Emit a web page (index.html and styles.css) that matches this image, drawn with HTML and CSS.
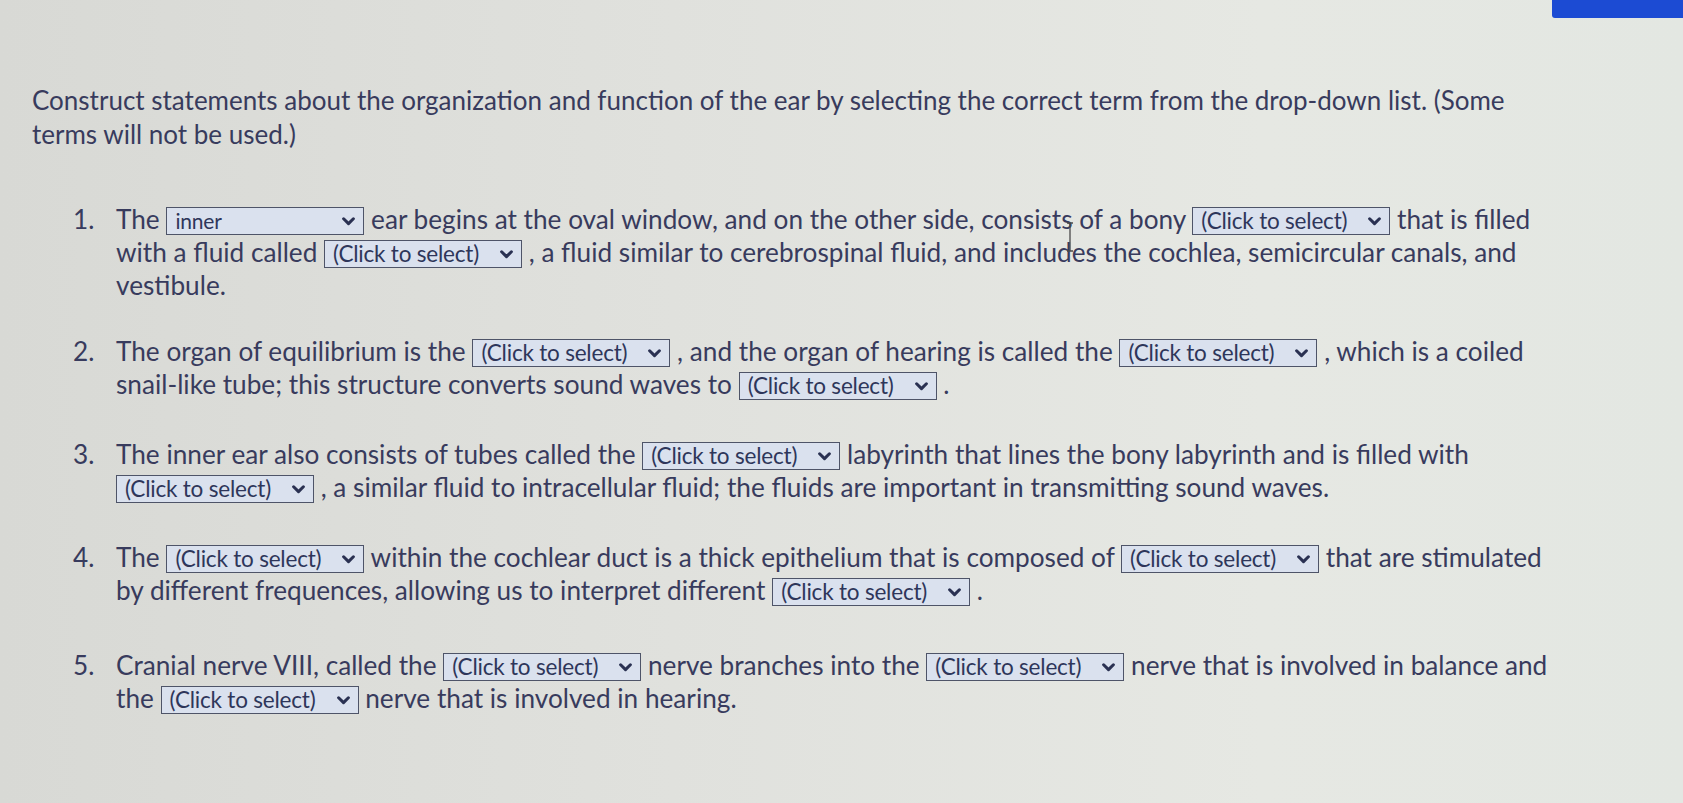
FILE: index.html
```html
<!DOCTYPE html>
<html lang="en">
<head>
<meta charset="utf-8">
<title>Ear organization</title>
<link rel="stylesheet" href="styles.css">
</head>
<body>
<div class="topbar"><div class="topbtn"></div></div>
<main class="content">
  <p class="intro">Construct statements about the organization and function of the ear by selecting the correct term from the drop-down list. (Some terms will not be used.)</p>
  <ol class="items">
    <li class="item"><span class="num">1.</span><div class="txt">The <span class="dd dd-inner"><span class="dd-label">inner</span><svg class="chev" viewBox="0 0 12 8"><path d="M1.5 1.5 L6 6 L10.5 1.5"/></svg></span> ear begins at the oval window, and on the other side, consists of a bony <span class="dd"><span class="dd-label">(Click to select)</span><svg class="chev" viewBox="0 0 12 8"><path d="M1.5 1.5 L6 6 L10.5 1.5"/></svg></span> that is filled with a fluid called <span class="dd"><span class="dd-label">(Click to select)</span><svg class="chev" viewBox="0 0 12 8"><path d="M1.5 1.5 L6 6 L10.5 1.5"/></svg></span> , a fluid similar to cerebrospinal fluid, and inclu<span class="cursor-wrap">d<svg class="ibeam" viewBox="0 0 8 30"><path d="M1 1 H7 M4 1 V29 M1 29 H7"/></svg></span>es the cochlea, semicircular canals, and vestibule.</div></li>
    <li class="item"><span class="num">2.</span><div class="txt">The organ of equilibrium is the <span class="dd"><span class="dd-label">(Click to select)</span><svg class="chev" viewBox="0 0 12 8"><path d="M1.5 1.5 L6 6 L10.5 1.5"/></svg></span> , and the organ of hearing is called the <span class="dd"><span class="dd-label">(Click to select)</span><svg class="chev" viewBox="0 0 12 8"><path d="M1.5 1.5 L6 6 L10.5 1.5"/></svg></span> , which is a coiled snail-like tube; this structure converts sound waves to <span class="dd"><span class="dd-label">(Click to select)</span><svg class="chev" viewBox="0 0 12 8"><path d="M1.5 1.5 L6 6 L10.5 1.5"/></svg></span> .</div></li>
    <li class="item"><span class="num">3.</span><div class="txt">The inner ear also consists of tubes called the <span class="dd"><span class="dd-label">(Click to select)</span><svg class="chev" viewBox="0 0 12 8"><path d="M1.5 1.5 L6 6 L10.5 1.5"/></svg></span> labyrinth that lines the bony labyrinth and is filled with <span class="dd"><span class="dd-label">(Click to select)</span><svg class="chev" viewBox="0 0 12 8"><path d="M1.5 1.5 L6 6 L10.5 1.5"/></svg></span> , a similar fluid to intracellular fluid; the fluids are important in transmitting sound waves.</div></li>
    <li class="item"><span class="num">4.</span><div class="txt">The <span class="dd"><span class="dd-label">(Click to select)</span><svg class="chev" viewBox="0 0 12 8"><path d="M1.5 1.5 L6 6 L10.5 1.5"/></svg></span> within the cochlear duct is a thick epithelium that is composed of <span class="dd"><span class="dd-label">(Click to select)</span><svg class="chev" viewBox="0 0 12 8"><path d="M1.5 1.5 L6 6 L10.5 1.5"/></svg></span> that are stimulated by different frequences, allowing us to interpret different <span class="dd"><span class="dd-label">(Click to select)</span><svg class="chev" viewBox="0 0 12 8"><path d="M1.5 1.5 L6 6 L10.5 1.5"/></svg></span> .</div></li>
    <li class="item item-last"><span class="num">5.</span><div class="txt">Cranial nerve VIII, called the <span class="dd"><span class="dd-label">(Click to select)</span><svg class="chev" viewBox="0 0 12 8"><path d="M1.5 1.5 L6 6 L10.5 1.5"/></svg></span> nerve branches into the <span class="dd"><span class="dd-label">(Click to select)</span><svg class="chev" viewBox="0 0 12 8"><path d="M1.5 1.5 L6 6 L10.5 1.5"/></svg></span> nerve that is involved in balance and the <span class="dd"><span class="dd-label">(Click to select)</span><svg class="chev" viewBox="0 0 12 8"><path d="M1.5 1.5 L6 6 L10.5 1.5"/></svg></span> nerve that is involved in hearing.</div></li>
  </ol>
</main>
</body>
</html>
```

FILE: styles.css
```css
html, body {
  margin: 0;
  padding: 0;
}
body {
  width: 1683px;
  height: 803px;
  overflow: hidden;
  background: linear-gradient(90deg, #d8d9d5 0%, #e0e1dd 40%, #e6e8e3 75%, #e3e7e2 100%);
  font-family: Lato, "Open Sans", "Liberation Sans", sans-serif;
  color: #383b5d;
}
.topbar {
  display: flex;
  justify-content: flex-end;
  height: 18px;
}
.topbtn {
  width: 131px;
  height: 18px;
  background: #1c4bd3;
  border-bottom-left-radius: 3px;
}
.content {
  width: 1526px;
  padding: 65px 0 0 32px;
}
.intro {
  margin: 0;
  font-size: 26px;
  line-height: 34px;
}
.items {
  list-style: none;
  margin: 52px 0 0 0;
  padding: 0;
}
.item {
  display: flex;
  font-size: 26.2px;
  line-height: 33px;
  margin-bottom: 37px;
}
.item:first-child {
  margin-bottom: 33px;
}
.item:nth-child(4) {
  margin-bottom: 42px;
}
.num {
  flex: 0 0 84px;
  box-sizing: border-box;
  padding-left: 41px;
}
.txt {
  flex: 1 1 auto;
}
.dd {
  display: inline-flex;
  align-items: center;
  justify-content: space-between;
  box-sizing: border-box;
  width: 198px;
  height: 28px;
  padding: 0 8px 0 8px;
  background: #dae1ee;
  border: 1px solid #4e5468;
  font-size: 22.5px;
  line-height: 26px;
  color: #2e365a;
}
.dd-inner .dd-label {
  font-size: 21px;
}
.dd-label {
  white-space: nowrap;
  letter-spacing: -0.2px;
}
.chev {
  width: 13px;
  height: 9px;
  fill: none;
  stroke: #2a3152;
  stroke-width: 2.8;
  stroke-linecap: round;
  stroke-linejoin: round;
}
.cursor-wrap {
  position: relative;
}
.ibeam {
  position: absolute;
  left: 9px;
  top: -14px;
  width: 8px;
  height: 30px;
  fill: none;
  stroke: #4a4a4a;
  stroke-width: 1.3;
}
```
